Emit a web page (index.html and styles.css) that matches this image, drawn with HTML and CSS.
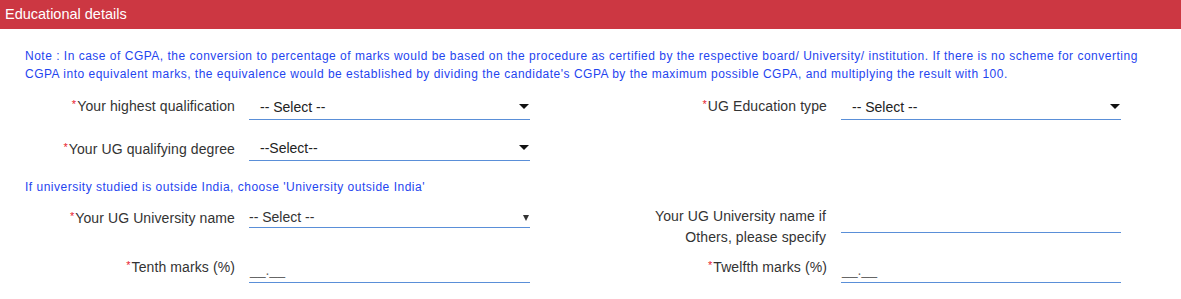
FILE: index.html
```html
<!DOCTYPE html>
<html lang="en">

<head>
    <meta charset="UTF-8">
    <meta name="viewport" content="width=device-width, initial-scale=1.0">
    <title>Educational details</title>
    <link rel="stylesheet" href="styles.css">
</head>

<body>
    <div class="panel">
        <div class="panel-head">Educational details</div>
        <div class="panel-body">
            <p class="note">Note : In case of CGPA, the conversion to percentage of marks would be based on the procedure as certified by the respective board/ University/ institution. If there is no scheme for converting CGPA into equivalent marks, the equivalence would be established by dividing the candidate's CGPA by the maximum possible CGPA, and multiplying the result with 100.</p>

            <div class="form-row row-1">
                <label class="field-label"><span class="req">*</span>Your highest qualification</label>
                <div class="select-box">-- Select --<span class="caret"></span></div>
                <label class="field-label"><span class="req">*</span>UG Education type</label>
                <div class="select-box">-- Select --<span class="caret"></span></div>
            </div>

            <div class="form-row row-2">
                <label class="field-label"><span class="req">*</span>Your UG qualifying degree</label>
                <div class="select-box">--Select--<span class="caret"></span></div>
            </div>

            <p class="note hint">If university studied is outside India, choose 'University outside India'</p>

            <div class="form-row row-3">
                <label class="field-label"><span class="req">*</span>Your UG University name</label>
                <div class="select-box plain">-- Select --<span class="caret small"></span></div>
                <label class="field-label two-line">Your UG University name if<br>Others, please specify</label>
                <div class="text-box tall"></div>
            </div>

            <div class="form-row row-4">
                <label class="field-label"><span class="req">*</span>Tenth marks (%)</label>
                <div class="text-box marks"><span class="mask">__.__</span></div>
                <label class="field-label"><span class="req">*</span>Twelfth marks (%)</label>
                <div class="text-box marks"><span class="mask">__.__</span></div>
            </div>
        </div>
    </div>
</body>

</html>
```

FILE: styles.css
```css
body {
    margin: 0;
    font-family: "Liberation Sans", Arial, sans-serif;
    background: #fff;
}

.panel-head {
    height: 29px;
    line-height: 28px;
    padding-left: 5px;
    background: #cc3742;
    color: #fff;
    font-size: 14.5px;
}

.panel-body {
    padding: 18px 0 0 0;
}

.note {
    margin: 0;
    padding: 0 25px;
    color: #1f45ef;
    font-size: 12px;
    letter-spacing: 0.5px;
    line-height: 18px;
}

.hint {
    margin-top: 17px;
}

.form-row {
    display: grid;
    grid-template-columns: 249px 281px 311px 280px;
    align-items: start;
}

.row-1 {
    margin-top: 6px;
}

.row-2 {
    margin-top: 10px;
}

.row-3 {
    margin-top: 4px;
}

.row-4 {
    margin-top: 1px;
}

.field-label {
    padding: 6px 14px 0 0;
    text-align: right;
    color: #333;
    font-size: 14px;
    letter-spacing: 0.1px;
    line-height: 18px;
}

.row-2 .field-label {
    padding-top: 8px;
}

.field-label.two-line {
    padding-right: 15px;
    line-height: 21px;
}

.row-3 .field-label {
    padding-top: 7px;
}

.row-3 .field-label.two-line {
    padding-top: 6px;
}

.row-4 .field-label {
    padding-top: 7px;
}

.req {
    color: #e8202f;
    font-size: 11px;
    vertical-align: 3px;
    margin-right: 1px;
}

.select-box {
    position: relative;
    height: 31px;
    padding: 9px 0 0 11px;
    box-sizing: border-box;
    border-bottom: 1px solid #5a8fd8;
    color: #222;
    font-size: 14px;
    line-height: 18px;
}

.select-box.plain {
    height: 28px;
    padding-top: 8px;
    padding-left: 0;
    color: #333;
}

.caret {
    position: absolute;
    right: 1px;
    top: 15px;
    width: 0;
    height: 0;
    border-left: 5px solid transparent;
    border-right: 5px solid transparent;
    border-top: 5px solid #111;
}

.caret.small {
    right: 1px;
    top: 15px;
    border-left-width: 3px;
    border-right-width: 3px;
    border-top-width: 6px;
    border-top-color: #333;
}

.text-box {
    height: 31px;
    box-sizing: border-box;
    border-bottom: 1px solid #5a8fd8;
    padding: 10px 0 0 1px;
    font-size: 14px;
    line-height: 18px;
    color: #666;
}

.text-box.tall {
    height: 33px;
}

.text-box.marks {
    height: 34px;
    padding-top: 12px;
}
```
